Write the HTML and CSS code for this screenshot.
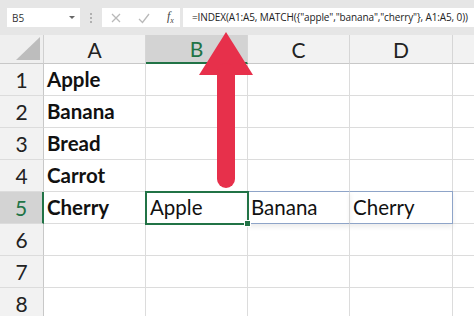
FILE: index.html
```html
<!DOCTYPE html>
<html>
<head>
<meta charset="utf-8">
<link rel="stylesheet" href="styles.css">
</head>
<body>
<div class="app">
  <div class="toolbar">
    <div class="namebox"><span class="nb-text">B5</span><span class="nb-caret"></span></div>
    <div class="grip"><i></i><i></i><i></i></div>
    <div class="fxbox">
      <svg class="ico" width="14" height="14" viewBox="0 0 14 14"><path d="M3 3 L11 11 M11 3 L3 11" stroke="#b9b9b9" stroke-width="1.3" fill="none"/></svg>
      <svg class="ico" width="14" height="14" viewBox="0 0 14 14"><path d="M2 8 L5.5 11.5 L12 3" stroke="#b9b9b9" stroke-width="1.3" fill="none"/></svg>
      <span class="fx">f<sub>x</sub></span>
    </div>
    <div class="formula">=INDEX(A1:A5, MATCH({"apple","banana","cherry"}, A1:A5, 0))</div>
  </div>
  <div class="sheet">
    <div class="corner"><span class="tri"></span></div>
    <div class="ch">A</div>
    <div class="ch sel">B</div>
    <div class="ch">C</div>
    <div class="ch">D</div>
    <div class="ch"></div>

    <div class="rh">1</div><div class="c b">Apple</div><div class="c"></div><div class="c"></div><div class="c"></div><div class="c"></div>
    <div class="rh">2</div><div class="c b">Banana</div><div class="c"></div><div class="c"></div><div class="c"></div><div class="c"></div>
    <div class="rh">3</div><div class="c b">Bread</div><div class="c"></div><div class="c"></div><div class="c"></div><div class="c"></div>
    <div class="rh">4</div><div class="c b">Carrot</div><div class="c"></div><div class="c"></div><div class="c"></div><div class="c"></div>
    <div class="rh sel">5</div><div class="c b">Cherry</div><div class="c active">Apple<span class="handle"></span></div><div class="c spill-l">Banana</div><div class="c spill-r">Cherry</div><div class="c"></div>
    <div class="rh">6</div><div class="c"></div><div class="c"></div><div class="c"></div><div class="c"></div><div class="c"></div>
    <div class="rh">7</div><div class="c"></div><div class="c"></div><div class="c"></div><div class="c"></div><div class="c"></div>
    <div class="rh">8</div><div class="c"></div><div class="c"></div><div class="c"></div><div class="c"></div><div class="c"></div>
  </div>
  <svg class="arrow" width="474" height="316" viewBox="0 0 474 316">
    <polygon points="226,32 199,75 253,75" fill="#e7304b"/>
    <line x1="226" y1="72" x2="226" y2="179" stroke="#e7304b" stroke-width="18" stroke-linecap="round"/>
  </svg>
</div>
</body>
</html>
```
FILE: styles.css
```css
html, body {
  margin: 0;
  padding: 0;
}
body {
  width: 474px;
  height: 316px;
  overflow: hidden;
  background: #ffffff;
  font-family: "Open Sans", "Liberation Sans", sans-serif;
}
.app {
  position: relative;
  width: 474px;
  height: 316px;
  overflow: hidden;
}
.toolbar {
  height: 35px;
  box-sizing: border-box;
  background: #e6e6e6;
  display: flex;
  align-items: flex-start;
  padding: 8px 0 0 7px;
}
.namebox {
  width: 73px;
  height: 19px;
  background: #fff;
  display: flex;
  align-items: center;
  justify-content: space-between;
  box-sizing: border-box;
  padding: 0 5px 0 5px;
}
.nb-text {
  font-size: 10px;
  color: #333;
}
.nb-caret {
  width: 0;
  height: 0;
  border-left: 3px solid transparent;
  border-right: 3px solid transparent;
  border-top: 3px solid #666;
}
.grip {
  width: 22px;
  height: 19px;
  display: flex;
  flex-direction: column;
  align-items: center;
  justify-content: center;
  gap: 2px;
}
.grip i {
  display: block;
  width: 2px;
  height: 2px;
  background: #b0b0b0;
}
.fxbox {
  width: 78px;
  height: 19px;
  background: #fff;
  display: flex;
  align-items: center;
  box-sizing: border-box;
  padding-left: 7px;
  gap: 14px;
}
.fx {
  font-family: "Liberation Serif", serif;
  font-style: italic;
  font-size: 12px;
  color: #444;
  margin-left: 2px;
}
.fx sub {
  font-size: 8px;
}
.formula {
  flex: 1;
  min-width: 0;
  height: 19px;
  margin-left: 3px;
  background: #fff;
  font-size: 10px;
  line-height: 19px;
  color: #222;
  padding-left: 9px;
  white-space: nowrap;
  overflow: hidden;
  letter-spacing: -0.12px;
}
.sheet {
  display: grid;
  grid-template-columns: 44px 102px 102px 102px 103px 60px;
  grid-template-rows: 29px repeat(8, 32px);
  font-family: "Lato", "Open Sans", sans-serif;
}
.corner {
  background: #efefef;
  border-right: 1px solid #d0d0d0;
  border-bottom: 1px solid #c8c8c8;
  position: relative;
}
.tri {
  position: absolute;
  right: 3px;
  bottom: 3px;
  width: 0;
  height: 0;
  border-left: 24px solid transparent;
  border-bottom: 23px solid #bdbdbd;
}
.ch {
  background: #f2f2f2;
  border-right: 1px solid #d6d6d6;
  border-bottom: 1px solid #c8c8c8;
  display: flex;
  align-items: center;
  justify-content: center;
  font-size: 21px;
  color: #222;
}
.ch.sel {
  background: #d3d3d3;
  color: #217346;
  border-bottom: 2px solid #217346;
}
.rh {
  background: #f2f2f2;
  border-right: 1px solid #c8c8c8;
  border-bottom: 1px solid #dcdcdc;
  display: flex;
  align-items: center;
  justify-content: center;
  font-size: 21px;
  color: #222;
}
.rh.sel {
  background: #d3d3d3;
  color: #217346;
  border-right: 2px solid #217346;
}
.c {
  border-right: 1px solid #dcdcdc;
  border-bottom: 1px solid #dcdcdc;
  font-size: 20.5px;
  line-height: 31px;
  padding-left: 3px;
  color: #111;
  white-space: nowrap;
  position: relative;
}
.c.b {
  font-weight: bold;
}
.c.active {
  outline: 2px solid #217346;
  outline-offset: -1px;
  z-index: 2;
  padding-left: 4px;
}
.handle {
  position: absolute;
  right: -4px;
  bottom: -4px;
  width: 5px;
  height: 5px;
  background: #217346;
  border: 1px solid #fff;
}
.c.spill-l, .c.spill-r {
  border-top: 1px solid #8ea4c8;
  border-bottom: 1px solid #8ea4c8;
  margin-top: -1px;
  box-shadow: 0 3px 5px rgba(0,0,0,0.08);
}
.c.spill-r {
  border-right: 1px solid #8ea4c8;
}
.arrow {
  position: absolute;
  left: 0;
  top: 0;
  pointer-events: none;
}
```
